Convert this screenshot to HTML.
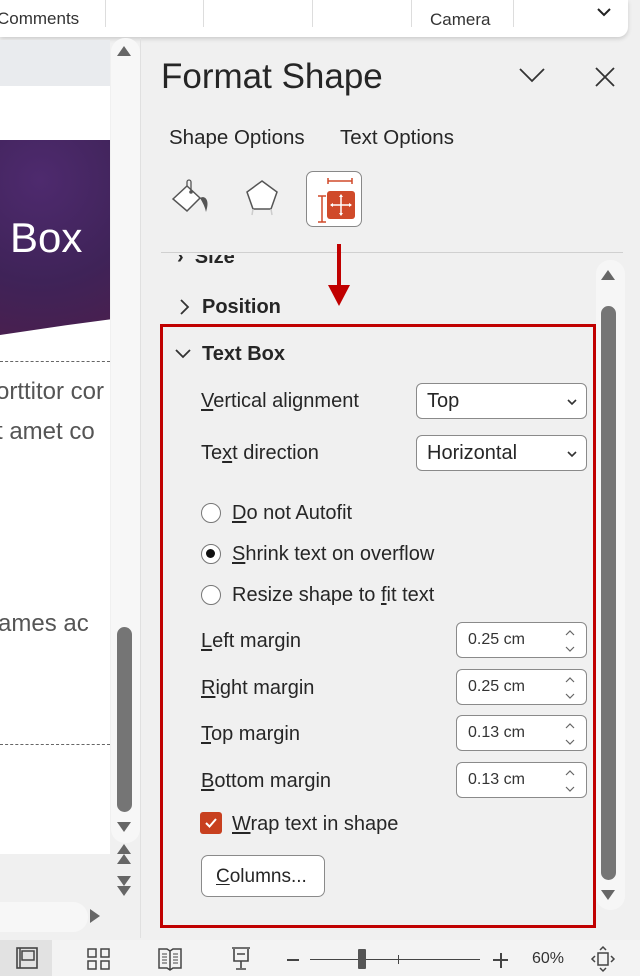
<!DOCTYPE html>
<html><head><meta charset="utf-8"><style>
*{margin:0;padding:0;box-sizing:border-box}
body{width:640px;height:976px;overflow:hidden;background:#f0f0f0;font-family:"Liberation Sans",sans-serif;color:#262626;position:relative}
.a{position:absolute;white-space:nowrap}
.lbl{font-size:20px;color:#262626}
u{text-decoration:underline;text-underline-offset:2px}
.dd{position:absolute;background:#fff;border:1px solid #8a8a8a;border-radius:6px;height:36px;font-size:20px;padding:6px 10px}
.sp{position:absolute;background:#fff;border:1px solid #8a8a8a;border-radius:6px;height:36px;width:131px;left:456px;font-size:16px;padding:8px 11px;color:#333}
.sp svg{position:absolute;right:10px;top:6px}
.rad{position:absolute;left:201px;width:20px;height:20px;border:1.5px solid #777;border-radius:50%;background:#fff}
</style></head><body>
<!-- ribbon -->
<div class="a" style="left:0;top:0;width:628px;height:37px;background:#fff;border-radius:0 0 10px 0;box-shadow:0 2px 4px rgba(0,0,0,.15)"></div>
<div class="a" style="left:-3px;top:9px;font-size:17px;color:#333">Comments</div>
<div class="a" style="left:430px;top:10px;font-size:17px;color:#333">Camera</div>
<div class="a" style="left:105px;top:0;width:1px;height:27px;background:#ddd"></div>
<div class="a" style="left:203px;top:0;width:1px;height:27px;background:#ddd"></div>
<div class="a" style="left:312px;top:0;width:1px;height:27px;background:#ddd"></div>
<div class="a" style="left:411px;top:0;width:1px;height:27px;background:#ddd"></div>
<div class="a" style="left:513px;top:0;width:1px;height:27px;background:#ddd"></div>
<svg class="a" style="left:596px;top:6px" width="16" height="12"><path d="M2 3l6 6 6-6" fill="none" stroke="#222" stroke-width="2"/></svg>
<!-- left slide area -->
<div class="a" style="left:0;top:40px;width:110px;height:46px;background:#e9ebee"></div>
<div class="a" style="left:0;top:86px;width:110px;height:768px;background:#fff"></div>
<div class="a" style="left:0;top:140px;width:110px;height:195px;background:radial-gradient(circle at 40px 40px,#4e2a6e,#3f2358 60%,#4a1f4e);clip-path:polygon(0 0,100% 0,100% 92%,60% 95%,0 100%)"></div>
<div class="a" style="left:10px;top:214px;font-size:42px;color:#fff">Box</div>
<div class="a" style="left:0;top:361px;width:110px;border-top:1px dashed #666"></div>
<div class="a" style="left:0;top:744px;width:110px;border-top:1px dashed #666"></div>
<div class="a" style="left:-4px;top:372px;font-size:24px;color:#555;line-height:40px">orttitor cor<br>t amet co</div>
<div class="a" style="left:-2px;top:610px;font-size:24px;color:#555">ames ac</div>
<div class="a" style="left:0;top:902px;width:88px;height:30px;background:#f7f7f7;border-radius:0 15px 15px 0"></div>
<svg class="a" style="left:88px;top:908px" width="14" height="16"><path d="M2 1l10 7-10 7z" fill="#666"/></svg>
<!-- left vscroll -->
<div class="a" style="left:111px;top:38px;width:29px;height:805px;background:#f7f7f7;border-radius:14px"></div>
<svg class="a" style="left:116px;top:44px" width="16" height="14"><path d="M8 2l7 10H1z" fill="#666"/></svg>
<div class="a" style="left:117px;top:627px;width:15px;height:185px;background:#757575;border-radius:8px"></div>
<svg class="a" style="left:116px;top:820px" width="16" height="14"><path d="M1 2h14L8 12z" fill="#666"/></svg>
<svg class="a" style="left:115px;top:843px" width="18" height="26"><path d="M9 1l7 10H2zM9 11l7 10H2z" fill="#666"/></svg>
<svg class="a" style="left:115px;top:872px" width="18" height="26"><path d="M2 4h14L9 14zM2 14h14L9 24z" fill="#666"/></svg>
<div class="a" style="left:140px;top:38px;width:1px;height:900px;background:#e0e0e0"></div>
<!-- panel -->
<div class="a" style="left:161px;top:57px;font-size:35px;color:#262626">Format Shape</div>
<svg class="a" style="left:518px;top:66px" width="28" height="18"><path d="M2 3l12 12 12-12" fill="none" stroke="#333" stroke-width="1.8"/></svg>
<svg class="a" style="left:594px;top:66px" width="22" height="22"><path d="M2 2l18 18M20 2L2 20" stroke="#333" stroke-width="1.8"/></svg>
<div class="a" style="left:169px;top:126px;font-size:20.5px">Shape Options</div>
<div class="a" style="left:340px;top:126px;font-size:20.5px">Text Options</div>
<!-- icons -->
<svg class="a" style="left:170px;top:178px" width="46" height="40"><path d="M3 21l14-13 13 12-13 13z" fill="#fff" stroke="#555" stroke-width="1.5"/><path d="M17 8V4a2 2 0 0 1 4 0v9" fill="none" stroke="#555" stroke-width="1.3"/><circle cx="21" cy="14" r="1.8" fill="#555"/><path d="M30 20c5-3 9 2 7 10l-1 4c-1-5-3-9-6-14z" fill="#555"/></svg>
<svg class="a" style="left:243px;top:178px" width="38" height="40"><path d="M19 3l15 11-6 17H10L4 14z" fill="#fff" stroke="#555" stroke-width="1.5"/><path d="M10 31l-1 6M28 31l1 6" stroke="#ccc" stroke-width="1.5"/></svg>
<div class="a" style="left:306px;top:171px;width:56px;height:56px;background:#fff;border:1.5px solid #888;border-radius:7px"></div>
<svg class="a" style="left:312px;top:177px" width="46" height="46"><path d="M16 4h24M16 1v6M40 1v6M6 19h8M6 45h8M10 19v26" stroke="#d04a2a" stroke-width="1.5" fill="none"/><rect x="15" y="14" width="28" height="28" rx="3" fill="#d04a2a"/><path d="M29 18v20M19 28h20" stroke="#fff" stroke-width="1.5"/><path d="M29 17l-2 3h4zM29 39l-2-3h4zM18 28l3-2v4zM40 28l-3-2v4z" fill="#fff"/></svg>
<div class="a" style="left:161px;top:252px;width:462px;height:1px;background:#d0d0d0"></div>
<div class="a" style="left:177px;top:246px;font-size:20px;font-weight:bold;clip-path:inset(9px 0 0 0)">›&nbsp;&nbsp;Size</div>
<svg class="a" style="left:178px;top:298px" width="12" height="18"><path d="M3 2l7 7-7 7" fill="none" stroke="#333" stroke-width="1.8"/></svg>
<div class="a" style="left:202px;top:296px;font-size:20px;font-weight:bold">Position</div>
<!-- arrow -->
<div class="a" style="left:337px;top:244px;width:4px;height:44px;background:#c00000"></div>
<svg class="a" style="left:328px;top:285px" width="22" height="22"><path d="M0 0h22L11 21z" fill="#c00000"/></svg>
<!-- red box -->
<div class="a" style="left:160px;top:324px;width:436px;height:604px;border:3px solid #c00000"></div>
<svg class="a" style="left:174px;top:347px" width="18" height="14"><path d="M2 3l7 7 7-7" fill="none" stroke="#333" stroke-width="1.8"/></svg>
<div class="a" style="left:202px;top:343px;font-size:20px;font-weight:bold">Text Box</div>
<div class="a lbl" style="left:201px;top:390px"><u>V</u>ertical alignment</div>
<div class="a lbl" style="left:201px;top:442px">Te<u>x</u>t direction</div>
<div class="dd" style="left:416px;top:383px;width:171px">Top<svg style="position:absolute;right:9px;top:14px" width="10" height="8"><path d="M1 2l4 4 4-4" fill="none" stroke="#333" stroke-width="1.6"/></svg></div>
<div class="dd" style="left:416px;top:435px;width:171px">Horizontal<svg style="position:absolute;right:9px;top:14px" width="10" height="8"><path d="M1 2l4 4 4-4" fill="none" stroke="#333" stroke-width="1.6"/></svg></div>
<div class="rad" style="top:503px"></div>
<div class="rad" style="top:544px"><div style="position:absolute;left:4px;top:4px;width:9px;height:9px;border-radius:50%;background:#111"></div></div>
<div class="rad" style="top:585px"></div>
<div class="a lbl" style="left:232px;top:502px"><u>D</u>o not Autofit</div>
<div class="a lbl" style="left:232px;top:543px"><u>S</u>hrink text on overflow</div>
<div class="a lbl" style="left:232px;top:584px">Resize shape to <u>f</u>it text</div>
<div class="a lbl" style="left:201px;top:630px"><u>L</u>eft margin</div>
<div class="a lbl" style="left:201px;top:677px"><u>R</u>ight margin</div>
<div class="a lbl" style="left:201px;top:723px"><u>T</u>op margin</div>
<div class="a lbl" style="left:201px;top:770px"><u>B</u>ottom margin</div>
<div class="sp" style="top:622px">0.25 cm<svg width="12" height="24"><path d="M2 6l4-4 4 4M2 18l4 4 4-4" fill="none" stroke="#666" stroke-width="1.2"/></svg></div>
<div class="sp" style="top:669px">0.25 cm<svg width="12" height="24"><path d="M2 6l4-4 4 4M2 18l4 4 4-4" fill="none" stroke="#666" stroke-width="1.2"/></svg></div>
<div class="sp" style="top:715px">0.13 cm<svg width="12" height="24"><path d="M2 6l4-4 4 4M2 18l4 4 4-4" fill="none" stroke="#666" stroke-width="1.2"/></svg></div>
<div class="sp" style="top:762px">0.13 cm<svg width="12" height="24"><path d="M2 6l4-4 4 4M2 18l4 4 4-4" fill="none" stroke="#666" stroke-width="1.2"/></svg></div>
<div class="a" style="left:200px;top:812px;width:22px;height:22px;background:#c8401f;border-radius:3px"></div>
<svg class="a" style="left:203px;top:815px" width="16" height="16"><path d="M3 8l3.5 3.5L13 4" fill="none" stroke="#fff" stroke-width="2"/></svg>
<div class="a lbl" style="left:232px;top:813px"><u>W</u>rap text in shape</div>
<div class="a" style="left:201px;top:855px;width:124px;height:42px;background:#fff;border:1px solid #8a8a8a;border-radius:7px;font-size:19px;padding:10px 0 0 14px"><u>C</u>olumns...</div>
<!-- panel scroll -->
<div class="a" style="left:596px;top:260px;width:29px;height:650px;background:#f6f6f6;border-radius:14px"></div>
<svg class="a" style="left:600px;top:268px" width="16" height="14"><path d="M8 2l7 10H1z" fill="#666"/></svg>
<div class="a" style="left:601px;top:306px;width:15px;height:574px;background:#757575;border-radius:8px"></div>
<svg class="a" style="left:600px;top:888px" width="16" height="14"><path d="M1 2h14L8 12z" fill="#666"/></svg>
<!-- status bar -->
<div class="a" style="left:0;top:940px;width:640px;height:36px;background:#f3f3f3"></div>
<div class="a" style="left:0;top:940px;width:52px;height:36px;background:#e2e2e2"></div>
<svg class="a" style="left:14px;top:946px" width="26" height="24"><rect x="3" y="2" width="20" height="20" fill="none" stroke="#444" stroke-width="1.6"/><rect x="8" y="5" width="12" height="9" fill="none" stroke="#444" stroke-width="1.5"/><path d="M6 2v20" stroke="#444" stroke-width="1.5"/></svg>
<svg class="a" style="left:86px;top:947px" width="26" height="24"><rect x="2" y="2" width="8" height="8" fill="none" stroke="#444" stroke-width="1.5"/><rect x="15" y="2" width="8" height="8" fill="none" stroke="#444" stroke-width="1.5"/><rect x="2" y="14" width="8" height="8" fill="none" stroke="#444" stroke-width="1.5"/><rect x="15" y="14" width="8" height="8" fill="none" stroke="#444" stroke-width="1.5"/></svg>
<svg class="a" style="left:157px;top:946px" width="26" height="26"><path d="M2 3h8l3 2 3-2h8v19h-8l-3 2-3-2H2zM13 5v19" fill="none" stroke="#444" stroke-width="1.5"/><path d="M5 8h5M5 11h5M5 14h5M5 17h5M16 8h5M16 11h5M16 14h5M16 17h5" stroke="#444"/></svg>
<svg class="a" style="left:228px;top:945px" width="26" height="28"><path d="M4 3h18M6 4v12h14V4M13 16v7M8 24h10" fill="none" stroke="#444" stroke-width="1.6"/><path d="M9 9h8" stroke="#444" stroke-width="1.5"/></svg>
<div class="a" style="left:287px;top:959px;width:12px;height:2px;background:#444"></div>
<div class="a" style="left:310px;top:959px;width:170px;height:1px;background:#444"></div>
<div class="a" style="left:358px;top:949px;width:8px;height:20px;background:#555;border-radius:1px"></div>
<div class="a" style="left:398px;top:955px;width:1px;height:9px;background:#444"></div>
<div class="a" style="left:493px;top:959px;width:15px;height:2px;background:#444"></div>
<div class="a" style="left:499.5px;top:952.5px;width:2px;height:15px;background:#444"></div>
<div class="a" style="left:532px;top:950px;font-size:16px;color:#333">60%</div>
<svg class="a" style="left:590px;top:945px" width="26" height="28"><rect x="8" y="8" width="10" height="12" fill="none" stroke="#444" stroke-width="1.5"/><path d="M10 5l3-3 3 3M10 23l3 3 3-3M5 11l-3 3 3 3M21 11l3 3-3 3" fill="none" stroke="#444" stroke-width="1.5"/></svg>
</body></html>
